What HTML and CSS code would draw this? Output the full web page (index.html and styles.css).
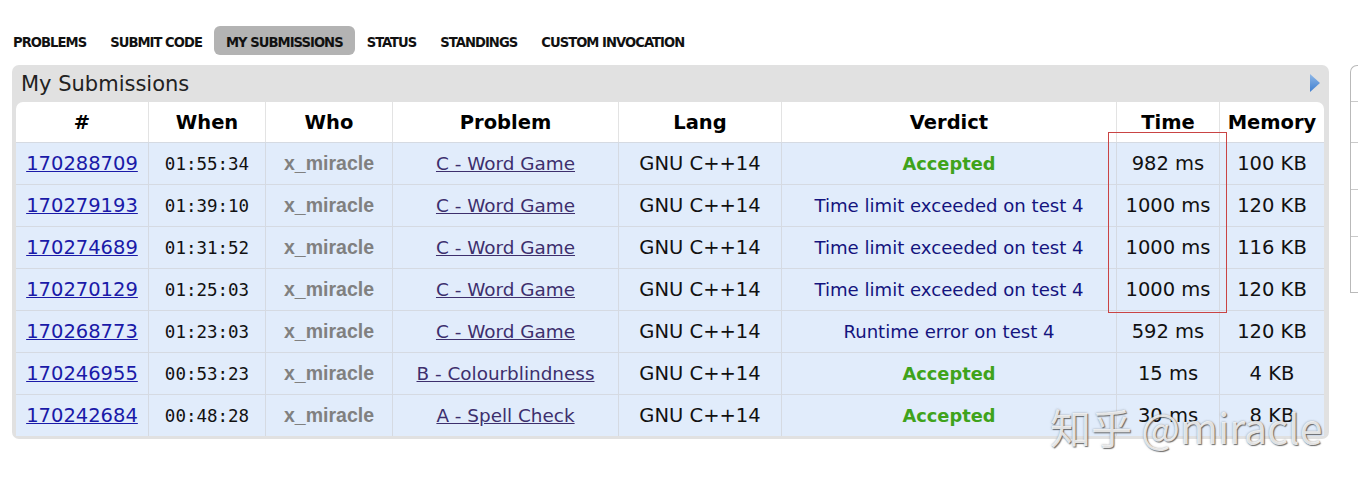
FILE: index.html
```html
<!DOCTYPE html>
<html>
<head>
<meta charset="utf-8">
<link rel="stylesheet" href="styles.css">
</head>
<body>
<div class="page">
  <ul class="menu">
    <li><a>PROBLEMS</a></li>
    <li><a>SUBMIT CODE</a></li>
    <li class="current"><a>MY SUBMISSIONS</a></li>
    <li><a>STATUS</a></li>
    <li><a>STANDINGS</a></li>
    <li><a>CUSTOM INVOCATION</a></li>
  </ul>
  <div class="main">
    <div class="roundbox">
      <div class="caption">
        <span class="title">My Submissions</span>
        <svg class="arrow" width="12" height="20" viewBox="0 0 12 20">
          <defs>
            <linearGradient id="g" x1="0" y1="0" x2="0" y2="1">
              <stop offset="0" stop-color="#8fb8e8"/>
              <stop offset="1" stop-color="#3f7fd0"/>
            </linearGradient>
          </defs>
          <polygon points="1,1 11,10 1,19" fill="url(#g)"/>
        </svg>
      </div>
      <table class="status">
        <colgroup>
          <col style="width:133px"><col style="width:117px"><col style="width:127px"><col style="width:226px">
          <col style="width:163px"><col style="width:335px"><col style="width:103px"><col style="width:104px">
        </colgroup>
        <thead>
          <tr><th>#</th><th>When</th><th>Who</th><th>Problem</th><th>Lang</th><th>Verdict</th><th>Time</th><th>Memory</th></tr>
        </thead>
        <tbody>
          <tr><td><a class="id">170288709</a></td><td class="when">01:55:34</td><td class="who">x_miracle</td><td class="pc"><a class="prob">C - Word Game</a></td><td>GNU C++14</td><td class="ok">Accepted</td><td>982 ms</td><td>100 KB</td></tr>
          <tr><td><a class="id">170279193</a></td><td class="when">01:39:10</td><td class="who">x_miracle</td><td class="pc"><a class="prob">C - Word Game</a></td><td>GNU C++14</td><td class="fail">Time limit exceeded on test 4</td><td>1000 ms</td><td>120 KB</td></tr>
          <tr><td><a class="id">170274689</a></td><td class="when">01:31:52</td><td class="who">x_miracle</td><td class="pc"><a class="prob">C - Word Game</a></td><td>GNU C++14</td><td class="fail">Time limit exceeded on test 4</td><td>1000 ms</td><td>116 KB</td></tr>
          <tr><td><a class="id">170270129</a></td><td class="when">01:25:03</td><td class="who">x_miracle</td><td class="pc"><a class="prob">C - Word Game</a></td><td>GNU C++14</td><td class="fail">Time limit exceeded on test 4</td><td>1000 ms</td><td>120 KB</td></tr>
          <tr><td><a class="id">170268773</a></td><td class="when">01:23:03</td><td class="who">x_miracle</td><td class="pc"><a class="prob">C - Word Game</a></td><td>GNU C++14</td><td class="fail">Runtime error on test 4</td><td>592 ms</td><td>120 KB</td></tr>
          <tr><td><a class="id">170246955</a></td><td class="when">00:53:23</td><td class="who">x_miracle</td><td class="pc"><a class="prob">B - Colourblindness</a></td><td>GNU C++14</td><td class="ok">Accepted</td><td>15 ms</td><td>4 KB</td></tr>
          <tr><td><a class="id">170242684</a></td><td class="when">00:48:28</td><td class="who">x_miracle</td><td class="pc"><a class="prob">A - Spell Check</a></td><td>GNU C++14</td><td class="ok">Accepted</td><td>30 ms</td><td>8 KB</td></tr>
        </tbody>
      </table>
    </div>
    <div class="sidebox">
      <div class="sb-row r1"></div>
      <div class="sb-row r2"></div>
      <div class="sb-row r3"></div>
      <div class="sb-row r4"></div>
    </div>
  </div>
  <div class="highlight"></div>
  <div class="watermark">知乎 @miracle</div>
</div>
</body>
</html>
```

FILE: styles.css
```css
html, body {
  margin: 0;
  padding: 0;
  background: #fff;
  overflow: hidden;
}
.page {
  position: relative;
  width: 1358px;
  height: 485px;
  font-family: "DejaVu Sans", Verdana, sans-serif;
}
.menu {
  list-style: none;
  margin: 0;
  padding: 26px 0 0 1px;
  display: flex;
  height: 29px;
}
.menu li {
  display: flex;
  align-items: center;
  padding: 0 12px;
  height: 29px;
  border-radius: 6px;
}
.menu li a {
  font-family: "DejaVu Sans Condensed", sans-serif;
  font-weight: bold;
  font-size: 14.6px;
  letter-spacing: -0.95px;
  color: #111;
  text-transform: uppercase;
  padding-top: 2px;
}
.menu li.current {
  background: #b3b3b3;
}
.main {
  display: flex;
  gap: 21px;
  margin-top: 10px;
  padding-left: 12px;
}
.roundbox {
  flex: none;
  width: 1308px;
  background: #e1e1e1;
  border-radius: 7px;
  padding: 0 5px 3px 4px;
}
.caption {
  height: 37px;
  display: flex;
  align-items: center;
  justify-content: space-between;
  padding: 0 3px 0 5px;
}
.title {
  font-size: 21px;
  color: #222;
}
.arrow {
  margin-top: -1px;
}
table.status {
  width: 1308px;
  table-layout: fixed;
  border-collapse: separate;
  border-spacing: 0;
  font-size: 19.5px;
}
table.status th {
  background: #fff;
  height: 40px;
  padding: 0;
  font-weight: bold;
  color: #000;
  text-align: center;
  border-right: 1px solid #e3e3e3;
  box-sizing: border-box;
}
table.status th:first-child { border-top-left-radius: 7px; }
table.status th:last-child { border-top-right-radius: 7px; border-right: none; }
table.status td {
  background: #e1ecfb;
  height: 42px;
  padding: 0;
  text-align: center;
  color: #111;
  border-top: 1px solid #d5dae2;
  border-right: 1px solid #d5dae2;
  box-sizing: border-box;
  white-space: nowrap;
}
table.status td:last-child { border-right: none; }
a.id {
  color: #1a1aa8;
  text-decoration: underline;
}
td.pc {
  font-size: 18.4px;
}
a.prob {
  color: #3d2f6d;
  text-decoration: underline;
}
td.when {
  font-family: "DejaVu Sans Mono", monospace;
  font-size: 17.5px;
}
td.who {
  font-family: "Liberation Sans", Arial, sans-serif;
  font-weight: bold;
  color: #808080 !important;
}
td.ok {
  color: #3fa31b !important;
  font-weight: bold;
  font-size: 17.8px;
}
td.fail {
  color: #14147e !important;
  font-size: 18.1px;
}
.sidebox {
  flex: none;
  width: 200px;
  height: 226px;
  border: 1px solid #b9b9b9;
  border-right: none;
  border-top-left-radius: 7px;
  display: flex;
  flex-direction: column;
}
.sb-row { border-bottom: 1px solid #c9c9c9; box-sizing: border-box; }
.sb-row.r1 { height: 36px; }
.sb-row.r2 { height: 41px; }
.sb-row.r3 { height: 47px; }
.sb-row.r4 { height: 47px; }
.highlight {
  position: absolute;
  left: 1108px;
  top: 132px;
  width: 117px;
  height: 179px;
  border: 1px solid #c94444;
}
.watermark {
  position: absolute;
  left: 1050px;
  top: 400px;
  font-family: "Noto Sans CJK SC", "DejaVu Sans", sans-serif;
  font-size: 41px;
  line-height: 52px;
  color: rgba(250, 250, 250, 0.85);
  text-shadow: 1px 1px 1px rgba(60, 60, 60, 0.7), 0 0 2px rgba(80, 80, 80, 0.5);
  white-space: nowrap;
}
```
